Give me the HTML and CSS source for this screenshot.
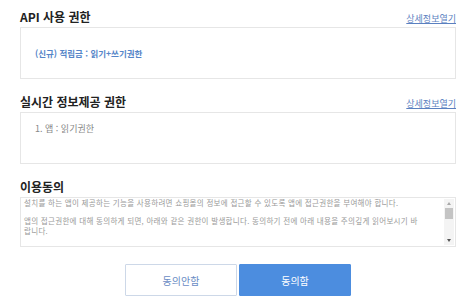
FILE: index.html
```html
<!DOCTYPE html>
<html lang="ko">
<head>
    <meta charset="UTF-8">
    <meta name="viewport" content="width=device-width, initial-scale=1.0">
    <title>앱 권한 동의</title>
    <link rel="stylesheet" href="styles.css">
</head>
<body>
    <div class="동의창">
        <section class="권한">
            <header class="권한-머리">
                <h2>API 사용 권한</h2>
                <a href="#" class="상세">상세정보열기</a>
            </header>
            <div class="권한-상자 가운데">
                <p class="강조">(신규) 적립금 : 읽기+쓰기권한</p>
            </div>
        </section>

        <section class="권한">
            <header class="권한-머리">
                <h2>실시간 정보제공 권한</h2>
                <a href="#" class="상세">상세정보열기</a>
            </header>
            <div class="권한-상자">
                <p class="목록">1. 앱 : 읽기권한</p>
            </div>
        </section>

        <section class="권한">
            <header class="권한-머리">
                <h2>이용동의</h2>
            </header>
            <div class="약관">
                <div class="약관-글">
                    <p>설치를 하는 앱이 제공하는 기능을 사용하려면 쇼핑몰의 정보에 접근할 수 있도록 앱에 접근권한을 부여해야 합니다.</p>
                    <p>앱의 접근권한에 대해 동의하게 되면, 아래와 같은 권한이 발생합니다. 동의하기 전에 아래 내용을 주의깊게 읽어보시기 바랍니다.</p>
                </div>
                <div class="스크롤">
                    <span class="화살 위"></span>
                    <span class="손잡이"></span>
                    <span class="화살 아래"></span>
                </div>
            </div>
        </section>

        <div class="버튼들">
            <button class="버튼 거절">동의안함</button>
            <button class="버튼 동의">동의함</button>
        </div>
    </div>
</body>
</html>
```

FILE: styles.css
```css
* {
    box-sizing: border-box;
    margin: 0;
    padding: 0;
}

body {
    background-color: white;
    font-family: "Noto Sans CJK KR", "Noto Sans", sans-serif;
    color: #222;
}

.동의창 {
    width: 436px;
    margin-left: 20px;
    padding-top: 7px;
}

.권한 {
    margin-bottom: 13px;
}

.권한-머리 {
    display: flex;
    justify-content: space-between;
    align-items: center;
    height: 20px;
}

.권한-머리 h2 {
    font-size: 12px;
    font-weight: bold;
    line-height: 20px;
    color: #222;
}

.상세 {
    font-size: 9px;
    color: #5a80c0;
    text-decoration: underline;
    margin-top: 2px;
}

.권한-상자 {
    border: 1px solid #e6e6e6;
    height: 52px;
    padding: 9px 14px;
}

.가운데 {
    display: flex;
    align-items: center;
}

.강조 {
    font-size: 8.5px;
    font-weight: bold;
    color: #5585c8;
}

.목록 {
    font-size: 9px;
    color: #888;
}

.약관 {
    display: flex;
    border: 1px solid #e6e6e6;
    height: 50px;
    overflow: hidden;
}

.약관-글 {
    flex: 1;
    padding: 0 21px 0 3px;
    font-size: 7.5px;
    letter-spacing: 0.3px;
    line-height: 10px;
    color: #999;
}

.약관-글 p {
    margin-bottom: 8px;
}

.스크롤 {
    width: 10px;
    display: flex;
    flex-direction: column;
    align-items: center;
    background-color: #f4f4f4;
    margin: 1px 1px 1px 0;
}

.화살 {
    width: 0;
    height: 0;
    border-left: 2.5px solid transparent;
    border-right: 2.5px solid transparent;
}

.위 {
    margin-top: 3px;
    border-bottom: 3px solid #a8a8a8;
}

.아래 {
    margin-top: auto;
    margin-bottom: 3px;
    border-top: 3px solid #555;
}

.손잡이 {
    width: 8px;
    height: 11px;
    margin-top: 3px;
    background-color: #c4c4c4;
}

.버튼들 {
    display: flex;
    justify-content: center;
    gap: 2px;
    margin-top: 17px;
}

.버튼 {
    width: 112px;
    height: 32px;
    font-family: "Noto Sans CJK KR", "Noto Sans", sans-serif;
    font-size: 10px;
    border-radius: 1px;
}

.거절 {
    background-color: white;
    border: 1px solid #cdd8e8;
    color: #6a8cc4;
}

.동의 {
    background-color: #4c8ddf;
    border: 1px solid #4c8ddf;
    color: white;
}
```
